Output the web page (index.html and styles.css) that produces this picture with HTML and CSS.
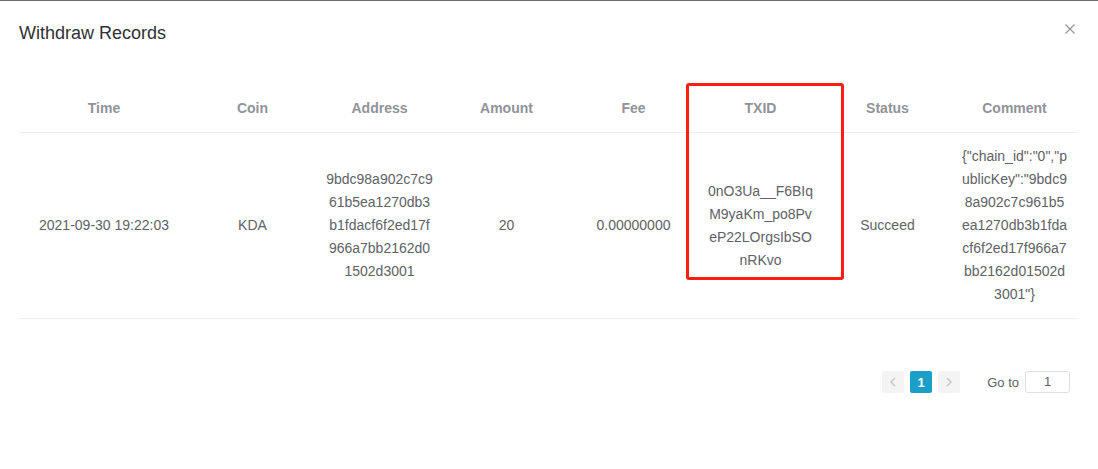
FILE: index.html
```html
<!DOCTYPE html>
<html lang="en">
<head>
<meta charset="utf-8">
<title>Withdraw Records</title>
<link rel="stylesheet" href="styles.css">
</head>
<body>
<div class="backdrop-line"></div>
<div class="dialog">
  <div class="dialog-header">
    <span class="dialog-title">Withdraw Records</span>
    <button class="dialog-close" aria-label="Close">
      <svg width="10" height="10" viewBox="0 0 10 10"><path d="M0.5 0.5 L9.5 9.5 M9.5 0.5 L0.5 9.5" stroke="#909399" stroke-width="1.1" fill="none"/></svg>
    </button>
  </div>
  <div class="dialog-body">
    <div class="table-wrap">
      <table class="records">
        <colgroup>
          <col class="col-time">
          <col class="col-std">
          <col class="col-std">
          <col class="col-std">
          <col class="col-std">
          <col class="col-std">
          <col class="col-std">
          <col class="col-std">
        </colgroup>
        <thead>
          <tr>
            <th><div class="cell">Time</div></th>
            <th><div class="cell">Coin</div></th>
            <th><div class="cell">Address</div></th>
            <th><div class="cell">Amount</div></th>
            <th><div class="cell">Fee</div></th>
            <th><div class="cell">TXID</div></th>
            <th><div class="cell">Status</div></th>
            <th><div class="cell">Comment</div></th>
          </tr>
        </thead>
        <tbody>
          <tr>
            <td><div class="cell">2021-09-30 19:22:03</div></td>
            <td><div class="cell">KDA</div></td>
            <td><div class="cell">9bdc98a902c7c961b5ea1270db3b1fdacf6f2ed17f966a7bb2162d01502d3001</div></td>
            <td><div class="cell">20</div></td>
            <td><div class="cell">0.00000000</div></td>
            <td><div class="cell">0nO3Ua__F6BIqM9yaKm_po8PveP22LOrgsIbSOnRKvo</div></td>
            <td><div class="cell">Succeed</div></td>
            <td><div class="cell">{"chain_id":"0","publicKey":"9bdc98a902c7c961b5ea1270db3b1fdacf6f2ed17f966a7bb2162d01502d3001"}</div></td>
          </tr>
        </tbody>
      </table>
      <div class="highlight-box"></div>
    </div>
    <div class="pagination">
      <button class="pg-btn pg-disabled" aria-label="Previous">
        <svg width="6" height="10" viewBox="0 0 6 10"><path d="M5 1 L1 5 L5 9" stroke="#c0c4cc" stroke-width="1.4" fill="none"/></svg>
      </button>
      <button class="pg-btn pg-active">1</button>
      <button class="pg-btn pg-disabled" aria-label="Next">
        <svg width="6" height="10" viewBox="0 0 6 10"><path d="M1 1 L5 5 L1 9" stroke="#c0c4cc" stroke-width="1.4" fill="none"/></svg>
      </button>
      <span class="pg-jump">Go to</span>
      <div class="pg-input">1</div>
    </div>
  </div>
</div>
</body>
</html>
```
FILE: styles.css
```css
html, body {
  margin: 0;
  padding: 0;
  background: #ffffff;
  font-family: "Liberation Sans", Arial, sans-serif;
}

.backdrop-line {
  height: 1px;
  background: #6f6f6f;
}

.dialog {
  position: relative;
  background: #ffffff;
}

.dialog-header {
  padding: 20px 19px 10px;
}

.dialog-title {
  display: block;
  font-size: 18px;
  line-height: 24px;
  color: #303133;
}

.dialog-close {
  position: absolute;
  top: 22px;
  right: 22px;
  width: 12px;
  height: 12px;
  padding: 1px;
  border: 0;
  background: transparent;
  display: flex;
  align-items: center;
  justify-content: center;
}

.dialog-body {
  padding: 30px 0 30px 19px;
}

.table-wrap {
  position: relative;
  width: 1059px;
}

.records {
  width: 1059px;
  table-layout: fixed;
  border-collapse: collapse;
  font-size: 14px;
  color: #606266;
}

.col-time { width: 170px; }
.col-std { width: 127px; }

.records th,
.records td {
  padding: 12px 0;
  text-align: center;
  vertical-align: middle;
  border-bottom: 1px solid #ebeef5;
}

.records th {
  font-weight: bold;
  color: #909399;
}

.cell {
  padding: 0 10px;
  line-height: 23px;
  word-break: break-all;
  box-sizing: border-box;
}

.highlight-box {
  position: absolute;
  left: 667px;
  top: -2px;
  width: 152px;
  height: 191px;
  border: 3px solid #ff1d0f;
  border-radius: 3px;
}

.pagination {
  display: flex;
  justify-content: flex-end;
  align-items: center;
  margin-top: 52px;
  padding-right: 29px;
}

.pg-btn {
  width: 22px;
  height: 22px;
  margin: 0 3px;
  padding: 0;
  border: 0;
  border-radius: 2px;
  background: #f4f4f5;
  display: flex;
  align-items: center;
  justify-content: center;
  font-family: "Liberation Sans", Arial, sans-serif;
  font-size: 13px;
  font-weight: bold;
}

.pg-active {
  background: #1a9fc8;
  color: #ffffff;
}

.pg-jump {
  margin-left: 24px;
  font-size: 13px;
  color: #606266;
}

.pg-input {
  margin-left: 6px;
  margin-right: -1px;
  width: 45px;
  height: 22px;
  box-sizing: border-box;
  border: 1px solid #dcdfe6;
  border-radius: 3px;
  font-size: 13px;
  line-height: 20px;
  text-align: center;
  color: #606266;
}
```
